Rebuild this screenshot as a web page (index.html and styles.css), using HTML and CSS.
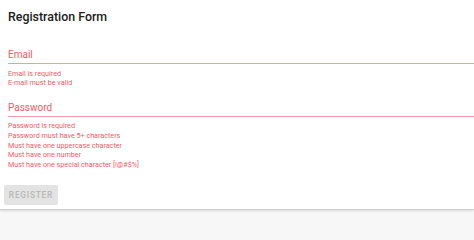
FILE: index.html
```html
<!DOCTYPE html>
<html lang="en">
<head>
<meta charset="utf-8">
<title>Registration Form</title>
<link rel="stylesheet" href="styles.css">
</head>
<body>
<div class="card">
  <div class="card-title">Registration Form</div>
  <form class="card-text">
    <div class="field">
      <label class="field-label">Email</label>
      <div class="messages">
        <div>Email is required</div>
        <div>E-mail must be valid</div>
      </div>
    </div>
    <div class="field field-password">
      <label class="field-label">Password</label>
      <div class="messages">
        <div>Password is required</div>
        <div>Password must have 5+ characters</div>
        <div>Must have one uppercase character</div>
        <div>Must have one number</div>
        <div>Must have one special character [!@#$%]</div>
      </div>
    </div>
  </form>
  <div class="card-actions">
    <button class="btn" type="button" disabled>Register</button>
  </div>
</div>
<div class="below"></div>
</body>
</html>
```

FILE: styles.css
```css
html, body {
  margin: 0;
  padding: 0;
}
body {
  background: #f7f7f7;
  font-family: Roboto, "Liberation Sans", sans-serif;
  width: 474px;
  height: 223px;
  overflow: hidden;
}
.card {
  background: #ffffff;
  border-bottom: 1px solid #cfcfcf;
  box-shadow: 0 1px 2px rgba(0, 0, 0, 0.12);
  padding-bottom: 4px;
}
.card-title {
  padding: 9px 8px 0;
  font-size: 12.4px;
  line-height: 16px;
  font-weight: 500;
  color: #212121;
}
.card-text {
  padding: 0 0 0 8px;
  margin: 0;
}
.field {
  margin-top: 24px;
}
.field-password {
  margin-top: 14px;
}
.field-label {
  display: block;
  font-size: 10px;
  line-height: 12px;
  color: #f25a66;
  padding-bottom: 2px;
  border-bottom: 1px solid #f49aa2;
}
.messages {
  margin-top: 4.5px;
  font-size: 7.2px;
  line-height: 9.65px;
  color: #f25a66;
}
.card-actions {
  padding: 15px 4px 0;
}
.btn {
  display: block;
  height: 20px;
  width: 54px;
  padding: 0;
  border: none;
  border-radius: 2px;
  background: #e3e3e3;
  color: #b9b9b9;
  font-family: Roboto, "Liberation Sans", sans-serif;
  font-size: 8.4px;
  font-weight: 500;
  letter-spacing: 0.75px;
  text-transform: uppercase;
}
```
